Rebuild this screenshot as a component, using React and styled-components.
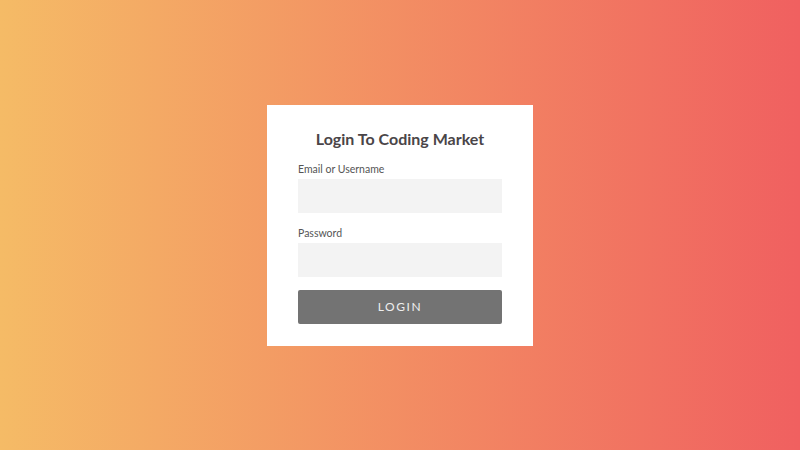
import React from 'react';
import styled, { createGlobalStyle } from 'styled-components';

const GlobalStyle = createGlobalStyle`
  html, body {
    margin: 0;
    padding: 0;
  }
  body {
    font-family: Lato, "Open Sans", sans-serif;
  }
`;

const Page = styled.div`
  width: 800px;
  height: 450px;
  display: flex;
  align-items: center;
  justify-content: center;
  background: linear-gradient(to right, #f5bb66, #f06060);
`;

const Card = styled.form`
  width: 266px;
  box-sizing: border-box;
  background: #fff;
  padding: 24px 31px 22px;
  display: flex;
  flex-direction: column;
`;

const Title = styled.h1`
  margin: 0 0 13px;
  font-size: 16px;
  line-height: 20px;
  font-weight: 700;
  color: #4a4548;
  text-align: center;
`;

const Label = styled.label`
  font-size: 10.5px;
  line-height: 14px;
  color: #555;
  margin-bottom: 3px;
`;

const Input = styled.input`
  height: 34px;
  box-sizing: border-box;
  border: none;
  background: #f3f3f3;
  margin-bottom: ${({ $gap }) => $gap}px;
  outline: none;
`;

const Button = styled.button`
  height: 34px;
  border: none;
  border-radius: 2px;
  background: #737373;
  color: #eee;
  font-family: Lato, sans-serif;
  font-size: 12px;
  letter-spacing: 1.6px;
  cursor: pointer;
`;

export default function App() {
  return (
    <>
      <GlobalStyle />
      <Page>
        <Card onSubmit={(e) => e.preventDefault()}>
          <Title>Login To Coding Market</Title>
          <Label>Email or Username</Label>
          <Input type="text" $gap={13} />
          <Label>Password</Label>
          <Input type="password" $gap={13} />
          <Button type="submit">LOGIN</Button>
        </Card>
      </Page>
    </>
  );
}
